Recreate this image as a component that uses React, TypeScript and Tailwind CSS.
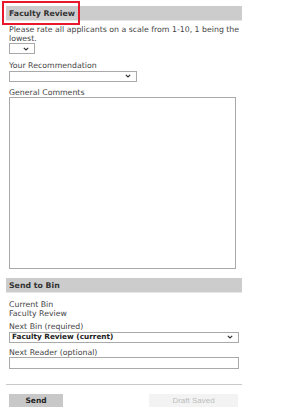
import React from "react";

function Chevron() {
  return (
    <svg className="w-[6px] h-[4px]" viewBox="0 0 6 4" fill="none" stroke="#333" strokeWidth={1.2}>
      <path d="M0.8 0.8L3 3L5.2 0.8" />
    </svg>
  );
}

function SelectBox({ width, value }: { width: string; value?: string }) {
  return (
    <div
      className={`${width} h-[11px] border border-[#a9a9a9] bg-white flex items-center justify-between pl-[2px] pr-[5px]`}
    >
      <span className="text-[7.3px] leading-none text-[#222] font-semibold">{value}</span>
      <Chevron />
    </div>
  );
}

function SectionHeader({ title }: { title: string }) {
  return (
    <div className="h-[15px] bg-[#cccccc] border-b border-[#e6e6e6] flex items-center pl-[3px]">
      <span className="text-[7.8px] font-bold text-[#333] pt-[1px]">{title}</span>
    </div>
  );
}

export default function App() {
  return (
    <div
      className="relative w-[298px] h-[418px] bg-white text-[#444]"
      style={{ fontFamily: '"DejaVu Sans", Verdana, sans-serif' }}
    >
      {/* red highlight around the first header */}
      <div className="absolute left-[2px] top-[1px] w-[78px] h-[24px] border-2 border-[#e8192c] z-10" />

      <div className="w-[236px] ml-[6px] pt-[6px]">
        <SectionHeader title="Faculty Review" />

        <div className="pl-[3px] text-[7.8px] leading-[8.5px]">
          <p className="mt-[5px]">
            Please rate all applicants on a scale from 1-10, 1 being the lowest.
          </p>
          <SelectBox width="w-[26px]" />

          <p className="mt-[8px]">Your Recommendation</p>
          <SelectBox width="w-[128px]" />

          <p className="mt-[7px]">General Comments</p>
          <div className="w-[227px] h-[172px] border border-[#a9a9a9] bg-white" />
        </div>

        <div className="mt-[9px]">
          <SectionHeader title="Send to Bin" />
        </div>

        <div className="pl-[3px] text-[7.8px] leading-[8.5px]">
          <p className="mt-[8px]">Current Bin</p>
          <p>Faculty Review</p>

          <p className="mt-[5px]">Next Bin (required)</p>
          <SelectBox width="w-[230px]" value="Faculty Review (current)" />

          <p className="mt-[6px]">Next Reader (optional)</p>
          <div className="w-[230px] h-[12px] border border-[#a9a9a9] bg-white" />
        </div>

        <div className="mt-[15px] h-px bg-[#c8c8c8]" />

        <div className="mt-[9px] pl-[3px] flex justify-between pr-[4px]">
          <button
            type="button"
            className="w-[54px] h-[13px] bg-[#c8c8c8] text-[7.5px] font-bold text-[#222] leading-none"
          >
            Send
          </button>
          <button
            type="button"
            className="w-[89px] h-[13px] bg-[#f3f3f3] text-[8px] text-[#bdbdbd] leading-none"
            style={{ fontFamily: '"Liberation Sans", Arial, sans-serif' }}
          >
            Draft Saved
          </button>
        </div>
      </div>
    </div>
  );
}
